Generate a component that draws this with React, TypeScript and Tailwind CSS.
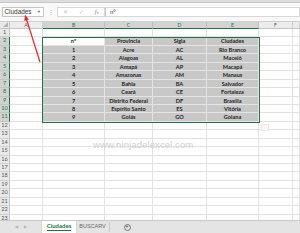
import React from "react";

const cols = "grid grid-cols-[10px_33px_62px_48px_54px_52px_34px_1fr]";

const data: [string, string, string, string][] = [
  ["1", "Acre", "AC", "Rio Branco"],
  ["2", "Alagoas", "AL", "Maceió"],
  ["3", "Amapá", "AP", "Macapá"],
  ["4", "Amazonas", "AM", "Manaus"],
  ["5", "Bahia", "BA", "Salvador"],
  ["6", "Ceará", "CE", "Fortaleza"],
  ["7", "Distrito Federal", "DF", "Brasília"],
  ["8", "Espírito Santo", "ES", "Vitória"],
  ["9", "Goiás", "GO", "Goiana"],
];

const heights = [8, 9, 8, 9, 8, 9, 8, 9, 8, 8, 9, 8, 9, 8, 9, 8, 8, 9, 8, 9, 8, 9, 8];

function RowHead({ n, sel }: { n: number; sel: boolean }) {
  return (
    <div
      className={
        sel
          ? "flex items-center justify-center bg-[#d2d2d2] text-[#217346] border-b border-[#c4c4c4] border-r-[1.5px] border-r-[#217346] text-[5.5px] leading-none"
          : "flex items-center justify-center bg-[#e9e9e9] text-[#555] border-b border-[#cfcfcf] border-r border-r-[#c6c6c6] text-[5.5px] leading-none"
      }
    >
      {n}
    </div>
  );
}

function Empty() {
  return <div className="border-r border-b border-[#e1e1e1] bg-white" />;
}

function Cell({ t, white }: { t: string; white?: boolean }) {
  return (
    <div
      className={
        (white ? "bg-white " : "bg-[#c8c8c8] ") +
        "flex items-center justify-center border-r border-b border-[#e4e4e4] font-bold text-[5.6px] text-[#1e1e1e] leading-none whitespace-nowrap overflow-hidden"
      }
    >
      {t}
    </div>
  );
}

export default function App() {
  const rows: React.ReactNode[] = [];
  for (let r = 1; r <= 23; r++) {
    const sel = r >= 2 && r <= 11;
    let cells: React.ReactNode;
    if (r === 2) {
      cells = (
        <>
          <Cell t="nº" white />
          <Cell t="Provincia" />
          <Cell t="Sigla" />
          <Cell t="Ciudades" />
        </>
      );
    } else if (r >= 3 && r <= 11) {
      const d = data[r - 3];
      cells = (
        <>
          <Cell t={d[0]} />
          <Cell t={d[1]} />
          <Cell t={d[2]} />
          <Cell t={d[3]} />
        </>
      );
    } else {
      cells = (
        <>
          <Empty />
          <Empty />
          <Empty />
          <Empty />
        </>
      );
    }
    const hClass = heights[r - 1] === 9 ? "h-[9px]" : "h-[8px]";
    rows.push(
      <div key={r} className={cols + " shrink-0 " + hClass}>
        <RowHead n={r} sel={sel} />
        <Empty />
        {cells}
        <Empty />
        <Empty />
      </div>
    );
  }

  const headers = ["A", "B", "C", "D", "E", "F", ""];
  return (
    <div
      className="relative w-[300px] h-[233px] overflow-hidden bg-white flex flex-col"
      style={{ fontFamily: "Lato, 'Liberation Sans', sans-serif" }}
    >
      {/* top ribbon edge */}
      <div className="h-[3px] shrink-0 bg-[#dcdcdc] border-b border-[#c8c8c8]" />
      {/* formula bar */}
      <div className="h-[18px] shrink-0 bg-[#f8f8f8] flex items-center">
        <div className="ml-[2px] w-[42px] h-[10px] bg-white border border-[#c6c6c6] flex items-center justify-between pl-[1.5px] pr-[2px]">
          <span className="text-[6.4px] text-[#333] leading-none" style={{ fontFamily: "'Liberation Sans', sans-serif" }}>
            Ciudades
          </span>
          <span className="text-[4px] text-[#666] leading-none">▼</span>
        </div>
        <div className="w-[13px] flex justify-center text-[6px] text-[#aaa] leading-none">⋮</div>
        <div className="w-[48px] h-[10px] bg-white border border-[#d8d8d8] flex items-center justify-around text-[6px] leading-none">
          <span className="text-[#c4c4c4]">✕</span>
          <span className="text-[#c4c4c4]">✓</span>
          <span className="text-[#777] italic" style={{ fontFamily: "'Liberation Serif', serif" }}>
            f<span className="text-[4.5px] not-italic">x</span>
          </span>
        </div>
        <div className="flex-1 h-[10px] bg-white border border-l-[#c8c8c8] border-[#d8d8d8] flex items-center pl-[4px]">
          <span className="text-[6px] text-[#333] leading-none" style={{ fontFamily: "'Liberation Sans', sans-serif" }}>
            nº
          </span>
        </div>
      </div>

      {/* grid */}
      <div className="relative flex-1 flex flex-col overflow-hidden">
        <div className={cols + " h-[8px] shrink-0 border-t border-[#d0d0d0]"}>
          <div className="relative bg-[#e9e9e9] border-r border-b border-[#c6c6c6]">
            <div className="absolute right-[1px] bottom-[1px] w-0 h-0 border-l-[5px] border-l-transparent border-b-[5px] border-b-[#b4b4b4]" />
          </div>
          {headers.map((h, i) => {
            const sel = i >= 1 && i <= 4;
            return (
              <div
                key={i}
                className={
                  sel
                    ? "flex items-center justify-center bg-[#d3d3d3] text-[#217346] text-[5px] leading-none border-r border-[#c0c0c0] border-b-[1.5px] border-b-[#217346]"
                    : "flex items-center justify-center bg-[#ececec] text-[#555] text-[5px] leading-none border-r border-[#cfcfcf] border-b border-b-[#c6c6c6]"
                }
              >
                {h}
              </div>
            );
          })}
        </div>
        {rows}

        {/* selection border */}
        <div className="absolute left-[42px] top-[16px] w-[218px] h-[86px] border-[1.5px] border-[#217346] pointer-events-none" />
        {/* quick analysis icon */}
        <div className="absolute left-[261px] top-[103px] w-[8px] h-[7px] border border-[#f1e8e3] bg-[#fdf8f5]" />
        {/* watermark */}
        <div
          className="absolute left-[93px] top-[119px] text-[9.5px] text-[#cfcfcf] leading-none tracking-[0.1px]"
          style={{ fontFamily: "'Liberation Sans', sans-serif" }}
        >
          www.ninjadelexcel.com
        </div>
      </div>

      {/* sheet tabs */}
      <div className="h-[13px] shrink-0 bg-[#e4e4e4] border-t border-[#cacaca] flex items-stretch">
        <div className="w-[42px] flex items-center justify-center gap-[6px] text-[4px] text-[#b0b0b0]">
          <span>◀</span>
          <span>▶</span>
        </div>
        <div className="w-[34px] bg-white flex flex-col items-center justify-center shadow-[0_0_0_0.5px_#c8c8c8]">
          <span className="text-[6px] font-bold text-[#217346] leading-none border-b-[1.5px] border-[#217346] pb-[0.5px]">
            Ciudades
          </span>
        </div>
        <div className="w-[34px] flex items-center justify-center border-r border-[#c8c8c8] my-[1px]">
          <span className="text-[5.5px] text-[#666] leading-none" style={{ fontFamily: "'Liberation Sans', sans-serif" }}>
            BUSCARV
          </span>
        </div>
        <div className="w-[34px] flex items-center justify-center">
          <div className="w-[7px] h-[7px] rounded-full border border-[#777] flex items-center justify-center text-[6px] text-[#555] leading-none">
            +
          </div>
        </div>
        <div className="flex-1" />
      </div>

      {/* red arrow */}
      <svg className="absolute left-0 top-0 pointer-events-none" width="300" height="233" viewBox="0 0 300 233">
        <line x1="40" y1="62" x2="26.4" y2="19" stroke="#e5262c" strokeWidth="1.2" />
        <polygon points="25,14.5 28.8,19.6 24.3,21" fill="#e5262c" />
      </svg>
    </div>
  );
}
